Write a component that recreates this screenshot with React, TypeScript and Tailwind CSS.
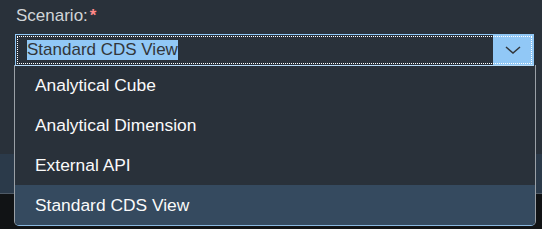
export default function App() {
  const options = ['Analytical Cube', 'Analytical Dimension', 'External API', 'Standard CDS View'];
  const selected = 'Standard CDS View';

  return (
    <div className="relative w-[542px] h-[229px] overflow-hidden bg-[#29313a] font-['Liberation_Sans',Arial,sans-serif] text-[17px]">
      {/* form field */}
      <div className="pt-[6px] pl-[16px] leading-[20px] text-[#d1d5d8]">
        Scenario:<span className="ml-[2px] font-bold text-[#ff8888]">*</span>
      </div>
      <div className="relative z-10 ml-[15px] mt-[8px] flex h-[32px] w-[519px] border border-[#91c8f6] border-b-[#b8dcf8] bg-[#29313a]">
        <div className="flex flex-1 items-center pl-[11px]">
          <span className="bg-[#91c8f6] leading-[20px] text-[#32363a]">Standard CDS View</span>
        </div>
        <div className="flex w-[40px] items-center justify-center bg-[#91c8f6]">
          <svg width="16" height="9" viewBox="0 0 16 9" fill="none">
            <path d="M1 1l7 6 7-6" stroke="#32363a" strokeWidth="1.5" />
          </svg>
        </div>
        <div className="pointer-events-none absolute inset-[1px] border border-dotted border-white" />
      </div>

      {/* content behind the popover */}
      <div className="mt-[88px] h-[40px] border-b border-[#4f5a66] bg-[#2b3a4a]" />
      <div className="h-full bg-[#111315]" />

      {/* dropdown list */}
      <div className="absolute left-[14px] top-[65px] w-[522px] overflow-hidden rounded-b-[5px] border border-t-0 border-[#9aa0a6] border-b-[#89b7de] bg-[#29313a]">
        {options.map((o) => (
          <div
            key={o}
            className={`flex h-[40px] items-center pl-[20px] text-[17.4px] text-[#fafafa] ${o === selected ? 'bg-[#354a5f]' : ''}`}
          >
            {o}
          </div>
        ))}
      </div>
    </div>
  );
}
